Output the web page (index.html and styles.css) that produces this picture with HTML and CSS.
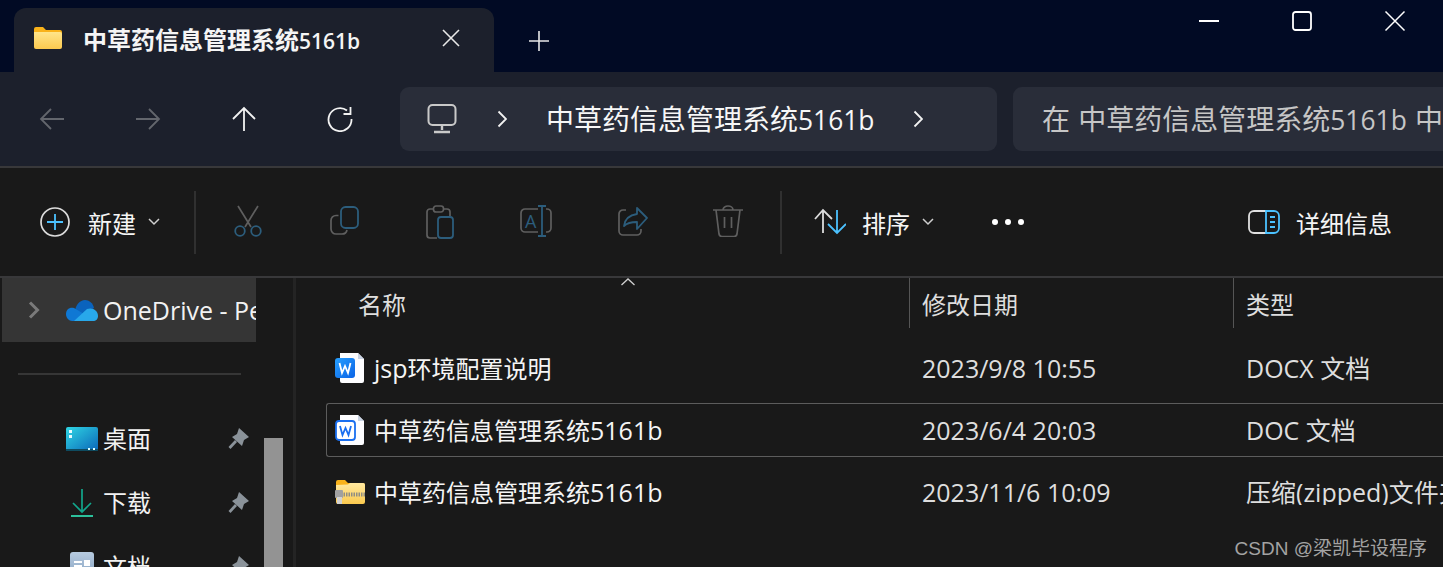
FILE: index.html
```html
<!DOCTYPE html>
<html lang="zh-CN">
<head>
    <meta charset="UTF-8">
    <meta name="viewport" content="width=device-width, initial-scale=1.0">
    <title>中草药信息管理系统5161b</title>
    <link rel="stylesheet" href="styles.css">
</head>
<body>
    <div class="titlebar">
        <div class="tab">
            <svg class="tab-folder" width="28" height="22" viewBox="0 0 28 22">
                <defs><linearGradient id="fold" x1="0" y1="0" x2="0" y2="1"><stop offset="0" stop-color="#ffe58a"/><stop offset="1" stop-color="#fcc94f"/></linearGradient></defs>
                <path d="M0 2a2 2 0 0 1 2-2h7l3 3h14a2 2 0 0 1 2 2v2H0z" fill="#f9b21a"/>
                <path d="M0 5h26a2 2 0 0 1 2 2v13a2 2 0 0 1-2 2H2a2 2 0 0 1-2-2z" fill="url(#fold)"/>
            </svg>
            <span class="tab-title">中草药信息管理系统<span class="tab-num">5161b</span></span>
            <svg class="tab-close" width="18" height="18" viewBox="0 0 18 18"><path d="M1 1l16 16M17 1L1 17" stroke="#e8e8e8" stroke-width="1.6"/></svg>
        </div>
        <svg class="tab-add" width="20" height="20" viewBox="0 0 20 20"><path d="M10 0v20M0 10h20" stroke="#e8e8e8" stroke-width="1.6"/></svg>
        <div class="win-btns">
            <svg width="22" height="22" viewBox="0 0 22 22"><path d="M1 11h20" stroke="#fff" stroke-width="2"/></svg>
            <svg width="20" height="21" viewBox="0 0 20 21"><rect x="1" y="1" width="18" height="18" rx="2.5" fill="none" stroke="#fff" stroke-width="1.8"/></svg>
            <svg width="22" height="22" viewBox="0 0 22 22"><path d="M1.500 1.500l19 19M20.500 1.500l-19 19" stroke="#fff" stroke-width="1.5"/></svg>
        </div>
    </div>

    <div class="addressbar">
        <svg class="nav-btn nav-back" width="26" height="24" viewBox="0 0 26 24"><path d="M25 12H2M12 2L2 12l10 10" fill="none" stroke="#63666d" stroke-width="1.8"/></svg>
        <svg class="nav-btn nav-forward" width="26" height="24" viewBox="0 0 26 24"><path d="M1 12h23M14 2l10 10-10 10" fill="none" stroke="#63666d" stroke-width="1.8"/></svg>
        <svg class="nav-btn nav-up" width="26" height="26" viewBox="0 0 26 26"><path d="M13 25V2M2 13L13 2l11 11" fill="none" stroke="#f2f2f2" stroke-width="1.8"/></svg>
        <svg class="nav-btn nav-refresh" width="26" height="26" viewBox="0 0 26 26"><path d="M20 4.500A11.500 11.500 0 1 0 24.500 13" fill="none" stroke="#f2f2f2" stroke-width="1.8"/><path d="M23.500 1v7h-7" fill="none" stroke="#f2f2f2" stroke-width="1.8"/></svg>
        <div class="crumbs">
            <svg class="crumb-pc" width="30" height="30" viewBox="0 0 30 30"><rect x="1.500" y="1" width="27" height="20" rx="4" fill="none" stroke="#c9c9c9" stroke-width="2"/><path d="M15 21v5M7 28h16" fill="none" stroke="#c9c9c9" stroke-width="2.400"/></svg>
            <svg class="crumb-sep" width="10" height="18" viewBox="0 0 10 18"><path d="M1.500 1.500L9 9l-7.500 7.500" fill="none" stroke="#f2f2f2" stroke-width="1.800"/></svg>
            <span class="crumb-text">中草药信息管理系统<span class="crumb-num">5161b</span></span>
            <svg class="crumb-sep crumb-end" width="10" height="18" viewBox="0 0 10 18"><path d="M1.500 1.500L9 9l-7.500 7.500" fill="none" stroke="#f2f2f2" stroke-width="1.800"/></svg>
        </div>
        <div class="search"><span>在 中草药信息管理系统<span class="crumb-num">5161b</span> 中搜索</span></div>
    </div>

    <div class="toolbar">
        <svg class="new-icon" width="30" height="30" viewBox="0 0 30 30"><circle cx="15" cy="15" r="14" fill="none" stroke="#dcdcdc" stroke-width="1.700"/><path d="M15 7v16M7 15h16" stroke="#4cc2ff" stroke-width="1.800"/></svg>
        <span class="tool-label new-label">新建</span>
        <svg class="caret" width="12" height="8" viewBox="0 0 12 8"><path d="M1 1l5 5 5-5" fill="none" stroke="#cfcfcf" stroke-width="1.500"/></svg>
        <div class="tool-sep first-sep"></div>
        <div class="tool-cmds">
            <div class="cmd">
                <svg width="32" height="32" viewBox="0 0 32 32"><path d="M6 1l13 21M26 1L13 22" fill="none" stroke="#5f5f5f" stroke-width="1.700"/><circle cx="8" cy="26" r="4.800" fill="none" stroke="#2c5d7c" stroke-width="1.800"/><circle cx="24" cy="26" r="4.800" fill="none" stroke="#2c5d7c" stroke-width="1.800"/></svg>
            </div>
            <div class="cmd">
                <svg width="32" height="32" viewBox="0 0 32 32"><path d="M10.500 10.500H8a5 5 0 0 0-5 5V24a5 5 0 0 0 5 5h6a5 5 0 0 0 5-4" fill="none" stroke="#5f5f5f" stroke-width="1.700"/><rect x="13" y="2" width="17" height="21" rx="4.500" fill="none" stroke="#2c5d7c" stroke-width="1.800"/></svg>
            </div>
            <div class="cmd">
                <svg width="32" height="34" viewBox="0 0 32 34"><path d="M9 4H6a3 3 0 0 0-3 3v23a3 3 0 0 0 3 3h7M19 4h4a3 3 0 0 1 3 3v4" fill="none" stroke="#5f5f5f" stroke-width="1.700"/><rect x="9.500" y="1" width="10" height="6" rx="2.500" fill="none" stroke="#5f5f5f" stroke-width="1.700"/><rect x="14" y="12" width="15" height="21" rx="3" fill="none" stroke="#2c5d7c" stroke-width="1.800"/></svg>
            </div>
            <div class="cmd">
                <svg width="32" height="32" viewBox="0 0 32 32"><path d="M18 4H5a4 4 0 0 0-4 4v15a4 4 0 0 0 4 4h13M26 4h1a4 4 0 0 1 4 4v15a4 4 0 0 1-4 4h-1" fill="none" stroke="#5f5f5f" stroke-width="1.700"/><path d="M22 1v30M18 1h8M18 31h8" fill="none" stroke="#2c5d7c" stroke-width="1.800"/><text x="5" y="22.500" class="rename-a">A</text></svg>
            </div>
            <div class="cmd">
                <svg width="32" height="32" viewBox="0 0 32 32"><path d="M10 5H7a4 4 0 0 0-4 4v17a4 4 0 0 0 4 4h14a4 4 0 0 0 4-4v-2" fill="none" stroke="#5f5f5f" stroke-width="1.700"/><path d="M8 21c1-8 6-11 13-12V3l10 10-10 11v-7c-6 0-10 1-13 4z" fill="none" stroke="#2c5d7c" stroke-width="1.800" stroke-linejoin="round"/></svg>
            </div>
            <div class="cmd">
                <svg width="32" height="32" viewBox="0 0 32 32"><path d="M1 5h30M4 5l3 24a3 3 0 0 0 3 2.500h12a3 3 0 0 0 3-2.500l3-24M11 5a5 4 0 0 1 10 0M12.500 12v11M19.500 12v11" fill="none" stroke="#5f5f5f" stroke-width="1.700"/></svg>
            </div>
        </div>
        <div class="tool-sep"></div>
        <svg class="sort-icon" width="32" height="32" viewBox="0 0 32 32"><path d="M9 4v23M1 13l8-9 9 9" fill="none" stroke="#dcdcdc" stroke-width="1.800"/><path d="M23 4v23M14 18l9 9 9-9" fill="none" stroke="#4cc2ff" stroke-width="1.800"/></svg>
        <span class="tool-label sort-label">排序</span>
        <svg class="caret" width="12" height="8" viewBox="0 0 12 8"><path d="M1 1l5 5 5-5" fill="none" stroke="#cfcfcf" stroke-width="1.500"/></svg>
        <svg class="dots" width="32" height="6" viewBox="0 0 32 6"><circle cx="3" cy="3" r="3" fill="#fff"/><circle cx="16" cy="3" r="3" fill="#fff"/><circle cx="29" cy="3" r="3" fill="#fff"/></svg>
        <svg class="details-icon" width="32" height="24" viewBox="0 0 32 24"><path d="M18 1H6a5 5 0 0 0-5 5v12a5 5 0 0 0 5 5h12" fill="none" stroke="#e0e0e0" stroke-width="1.800"/><path d="M18 1h8a5 5 0 0 1 5 5v12a5 5 0 0 1-5 5h-8z" fill="none" stroke="#4cc2ff" stroke-width="1.800"/><path d="M22 7h5M22 12h5M22 17h5" stroke="#4cc2ff" stroke-width="1.800"/></svg>
        <span class="tool-label">详细信息</span>
    </div>

    <div class="main">
        <nav class="nav">
            <div class="nav-drive">
                <svg class="drive-arrow" width="12" height="18" viewBox="0 0 12 18"><path d="M2 1.500L9.500 9 2 16.500" fill="none" stroke="#7a7a7a" stroke-width="3"/></svg>
                <svg class="nav-icon" width="32" height="21" viewBox="0 0 32 21">
                    <path d="M9 12C9 5 14 0 19 0c4 0 8 3 9 8L17 15z" fill="#0a63bd"/>
                    <path d="M0 14c0-4 3-7 8-6l10 6-8 7H6c-3 0-6-3-6-7z" fill="#0f78d4"/>
                    <path d="M8 21L21 9c6-2 11 2 11 7 0 3-2 5-5 5z" fill="#28a8ea"/>
                </svg>
                <span class="drive-name">OneDrive - Personal</span>
            </div>
            <div class="nav-rule"></div>
            <div class="nav-item">
                <svg class="nav-icon" width="32" height="24" viewBox="0 0 32 24">
                    <defs><linearGradient id="desk" x1="0" y1="0" x2="1" y2="1"><stop offset="0" stop-color="#2fd6e4"/><stop offset="1" stop-color="#0b66b8"/></linearGradient></defs>
                    <rect width="32" height="24" rx="2" fill="url(#desk)"/>
                    <path d="M0 22h32v1a1 1 0 0 1-1 1H1a1 1 0 0 1-1-1z" fill="#0e4b60"/>
                    <rect x="3" y="3" width="3" height="3" fill="#e8fbff"/><rect x="3" y="8" width="3" height="3" fill="#e8fbff"/>
                    <rect x="22" y="21" width="2" height="2" fill="#dff"/><rect x="27" y="21" width="2" height="2" fill="#dff"/>
                </svg>
                <span class="nav-name">桌面</span>
                <svg class="pin" width="22" height="22" viewBox="0 0 22 22"><path d="M11 0l10 9-5 3-2 6L4 9l5-3z" fill="#8a9299"/><path d="M8 13l-6.500 7" stroke="#8a9299" stroke-width="2.800"/></svg>
            </div>
            <div class="nav-item">
                <svg class="nav-icon" width="32" height="28" viewBox="0 0 32 28"><path d="M16 0v23M7 14l9 9 9-9" fill="none" stroke="#12a68c" stroke-width="1.700"/><path d="M5 27h22" stroke="#2cc09b" stroke-width="2"/></svg>
                <span class="nav-name">下载</span>
                <svg class="pin" width="22" height="22" viewBox="0 0 22 22"><path d="M11 0l10 9-5 3-2 6L4 9l5-3z" fill="#8a9299"/><path d="M8 13l-6.500 7" stroke="#8a9299" stroke-width="2.800"/></svg>
            </div>
            <div class="nav-item">
                <svg class="nav-icon" width="32" height="30" viewBox="0 0 32 30">
                    <defs><linearGradient id="docs" x1="0" y1="0" x2="0" y2="1"><stop offset="0" stop-color="#b7cbe0"/><stop offset="1" stop-color="#7f9cbc"/></linearGradient></defs>
                    <rect x="4" y="0" width="24" height="30" rx="3" fill="url(#docs)"/>
                    <rect x="8" y="9" width="8" height="2" fill="#fff"/><rect x="8" y="13" width="8" height="2" fill="#fff"/><rect x="18" y="8" width="6" height="6" fill="#fff"/>
                </svg>
                <span class="nav-name">文档</span>
                <svg class="pin" width="22" height="22" viewBox="0 0 22 22"><path d="M11 0l10 9-5 3-2 6L4 9l5-3z" fill="#8a9299"/><path d="M8 13l-6.500 7" stroke="#8a9299" stroke-width="2.800"/></svg>
            </div>
        </nav>
        <div class="nav-scroll"><div class="nav-thumb"></div></div>
        <div class="pane-split"></div>

        <section class="files">
            <div class="file-head">
                <div class="head-cell head-name">名称</div>
                <div class="head-cell">修改日期</div>
                <div class="head-cell">类型</div>
                <svg class="sort-caret" width="16" height="8" viewBox="0 0 16 8"><path d="M1.500 7L8 1l6.500 6" fill="none" stroke="#cfcfcf" stroke-width="1.300"/></svg>
            </div>
            <div class="file-list">
                <div class="file-row">
                    <div class="file-name">
                        <svg class="file-icon" width="30" height="32" viewBox="0 0 30 32">
                            <defs><linearGradient id="wps" x1="0" y1="0" x2="1" y2="1"><stop offset="0" stop-color="#27a0ff"/><stop offset="1" stop-color="#0a62e6"/></linearGradient></defs>
                            <path d="M5 1h18l6 6v22a2 2 0 0 1-2 2H7a2 2 0 0 1-2-2z" fill="#fdfdff"/>
                            <path d="M23 1l6 6h-6z" fill="#c9d3e3"/>
                            <rect x="0" y="6" width="20" height="20" rx="3" fill="url(#wps)"/>
                            <path d="M4.500 11l2.500 10 3-7 3 7 2.500-10" fill="none" stroke="#fff" stroke-width="1.800"/>
                        </svg>
                        <span>jsp<span class="zh">环境配置说明</span></span>
                    </div>
                    <div class="file-cell">2023/9/8 10:55</div>
                    <div class="file-cell">DOCX <span class="zh">文档</span></div>
                </div>
                <div class="file-row file-row-on">
                    <div class="file-name">
                        <svg class="file-icon" width="30" height="32" viewBox="0 0 30 32">
                            <path d="M5 1h18l6 6v22a2 2 0 0 1-2 2H7a2 2 0 0 1-2-2z" fill="#fdfdff"/>
                            <path d="M23 1l6 6h-6z" fill="#c9d3e3"/>
                            <rect x="1" y="7" width="19" height="19" rx="3" fill="#fff" stroke="#1a6ff0" stroke-width="1.800"/>
                            <path d="M5 12l2.500 9 3-7 3 7 2.500-9" fill="none" stroke="#1a6ff0" stroke-width="1.800"/>
                        </svg>
                        <span><span class="zh">中草药信息管理系统</span>5161b</span>
                    </div>
                    <div class="file-cell">2023/6/4 20:03</div>
                    <div class="file-cell">DOC <span class="zh">文档</span></div>
                </div>
                <div class="file-row">
                    <div class="file-name">
                        <svg class="file-icon" width="30" height="24" viewBox="0 0 30 24">
                            <defs><linearGradient id="zipf" x1="0" y1="0" x2="0" y2="1"><stop offset="0" stop-color="#ffe9a0"/><stop offset="1" stop-color="#fbc94e"/></linearGradient></defs>
                            <path d="M1 2a2 2 0 0 1 2-2h7l3 3h15a2 2 0 0 1 2 2v2H1z" fill="#f9b21a"/>
                            <path d="M1 5l12-.5 2-1.500h13a2 2 0 0 1 2 2v17a2 2 0 0 1-2 2H3a2 2 0 0 1-2-2z" fill="url(#zipf)"/>
                            <path d="M6 14.500h24" stroke="#8f8d84" stroke-width="4" stroke-dasharray="1.500 1"/>
                            <rect x="0" y="10" width="8" height="8" rx="1" fill="#a0a0a0"/><rect x="2" y="17" width="5" height="7" fill="#d2d2d2"/>
                        </svg>
                        <span><span class="zh">中草药信息管理系统</span>5161b</span>
                    </div>
                    <div class="file-cell">2023/11/6 10:09</div>
                    <div class="file-cell"><span class="zh">压缩</span>(zipped)<span class="zh">文件夹</span></div>
                </div>
            </div>
        </section>
    </div>

    <div class="watermark">CSDN @梁凯毕设程序</div>
</body>
</html>
```

FILE: styles.css
```css
* {
    box-sizing: border-box;
}
html, body {
    height: 567px;
}
body {
    margin: 0;
    position: relative;
    overflow: hidden;
    background: #191919;
    color: #f2f2f2;
    font-family: "Open Sans", "Noto Sans CJK SC", sans-serif;
    line-height: 1;
}
svg {
    display: block;
    flex: none;
}
.zh {
    font-size: 24px;
}

/* title bar */
.titlebar {
    height: 72px;
    display: flex;
    align-items: flex-end;
    background: #010a24;
    padding-left: 14px;
}
.tab {
    width: 480px;
    height: 64px;
    display: flex;
    align-items: center;
    padding-left: 20px;
    background: #1c202c;
    border-radius: 12px 12px 0 0;
}
.tab-folder {
    margin-top: -4px;
}
.tab-title {
    margin-left: 21px;
    font-size: 24px;
    font-weight: 700;
    white-space: nowrap;
    width: 337px;
    color: #f5f5f5;
}
.tab-num {
    font-size: 21px;
    font-weight: 600;
}
.tab-close {
    margin-top: -4px;
    margin-left: 22px;
}
.tab-add {
    margin-left: 35px;
    margin-bottom: 21px;
}
.win-btns {
    margin-left: 649px;
    margin-bottom: 40px;
    display: flex;
    align-items: center;
    gap: 72px;
}

/* address bar */
.addressbar {
    height: 96px;
    display: flex;
    align-items: center;
    background: #1c202c;
    border-bottom: 2px solid #38383a;
    padding-left: 39px;
    overflow: hidden;
}
.nav-forward {
    margin-left: 70px;
}
.nav-up {
    margin-left: 70px;
}
.nav-refresh {
    margin-left: 70px;
}
.crumbs {
    margin-left: 47px;
    width: 597px;
    height: 64px;
    display: flex;
    align-items: center;
    padding-left: 27px;
    background: #292d39;
    border-radius: 9px;
    flex: none;
}
.crumb-sep {
    margin-left: 40px;
}
.crumb-text {
    margin-left: 39px;
    font-size: 28px;
    white-space: nowrap;
    color: #f7f7f7;
}
.crumb-num {
    font-size: 26.400px;
}
.crumb-end {
    margin-left: 38px;
}
.search {
    margin-left: 16px;
    width: 500px;
    height: 64px;
    display: flex;
    align-items: center;
    padding-left: 29px;
    background: #292d39;
    border-radius: 9px;
    flex: none;
    font-size: 28px;
    color: #c6c6c6;
    white-space: nowrap;
    word-spacing: 1px;
}

/* command bar */
.toolbar {
    height: 110px;
    display: flex;
    align-items: center;
    background: #191919;
    border-bottom: 2px solid #38383a;
    padding-left: 40px;
}
.tool-label {
    font-size: 24px;
    color: #f5f5f5;
    white-space: nowrap;
    padding-top: 4px;
}
.new-label {
    margin-left: 18px;
}
.caret {
    margin-left: 12px;
}
.tool-sep {
    width: 2px;
    height: 63px;
    background: #303030;
    flex: none;
}
.first-sep {
    margin-left: 34px;
}
.tool-cmds {
    display: flex;
    margin-left: 4px;
    margin-right: 4px;
}
.cmd {
    width: 96px;
    display: flex;
    justify-content: center;
}
.rename-a {
    font-family: "Open Sans", sans-serif;
    font-size: 18px;
    fill: #2c5d7c;
}
.sort-icon {
    margin-left: 32px;
}
.sort-label {
    margin-left: 16px;
}
.dots {
    margin-left: 58px;
}
.details-icon {
    margin-left: 224px;
    margin-right: 16px;
}

/* body of the window */
.main {
    height: 289px;
    display: flex;
    overflow: hidden;
}
.nav {
    width: 256px;
    flex: none;
}
.nav-drive {
    height: 64px;
    margin-left: 2px;
    display: flex;
    align-items: center;
    background: #353535;
    overflow: hidden;
    white-space: nowrap;
}
.drive-arrow {
    margin-left: 26px;
}
.drive-arrow + .nav-icon {
    margin-left: 26px;
}
.drive-name {
    margin-left: 5px;
    font-size: 25px;
}
.nav-rule {
    height: 2px;
    margin: 31px 15px 32px 18px;
    background: #363636;
}
.nav-item {
    height: 64px;
    display: flex;
    align-items: center;
    padding-left: 66px;
    padding-right: 6px;
}
.nav-name {
    margin-left: 5px;
    font-size: 24px;
}
.pin {
    margin-left: auto;
}
.nav-scroll {
    width: 19px;
    margin-left: 8px;
    flex: none;
    padding-top: 160px;
}
.nav-thumb {
    height: 129px;
    background: #939393;
}
.pane-split {
    width: 3px;
    margin-left: 10px;
    flex: none;
    background: #242424;
}

/* file list */
.files {
    margin-left: 30px;
    flex: none;
    width: 1117px;
}
.file-head {
    position: relative;
    height: 50px;
    display: grid;
    grid-template-columns: 583px 324px 1fr;
    align-items: stretch;
    font-size: 24px;
    color: #dedede;
}
.head-cell {
    display: flex;
    align-items: center;
    padding-left: 12px;
    padding-top: 4px;
    border-left: 1px solid #555;
}
.head-name {
    padding-left: 32px;
    border-left: 0;
}
.sort-caret {
    position: absolute;
    left: 294px;
    top: 0;
}
.file-list {
    margin-top: 13px;
    display: flex;
    flex-direction: column;
    gap: 8px;
}
.file-row {
    height: 54px;
    display: grid;
    grid-template-columns: 583px 324px 1fr;
    align-items: center;
    border: 1px solid transparent;
    border-right: 0;
    border-radius: 3px 0 0 3px;
    font-size: 25px;
    white-space: nowrap;
}
.file-row-on {
    border-color: #5c5c5c;
}
.file-name {
    display: flex;
    align-items: center;
    padding-left: 8px;
    gap: 9px;
    color: #f5f5f5;
}
.file-cell {
    padding-left: 12px;
    color: #dedede;
    overflow: hidden;
}
.file-cell .zh {
    font-size: 25px;
}
.file-name span {
    padding-top: 1px;
}
.watermark {
    position: absolute;
    right: 16px;
    bottom: 9px;
    font-family: "Liberation Sans", "Noto Sans CJK SC", sans-serif;
    font-size: 19px;
    color: #a3a3a3;
}
```
